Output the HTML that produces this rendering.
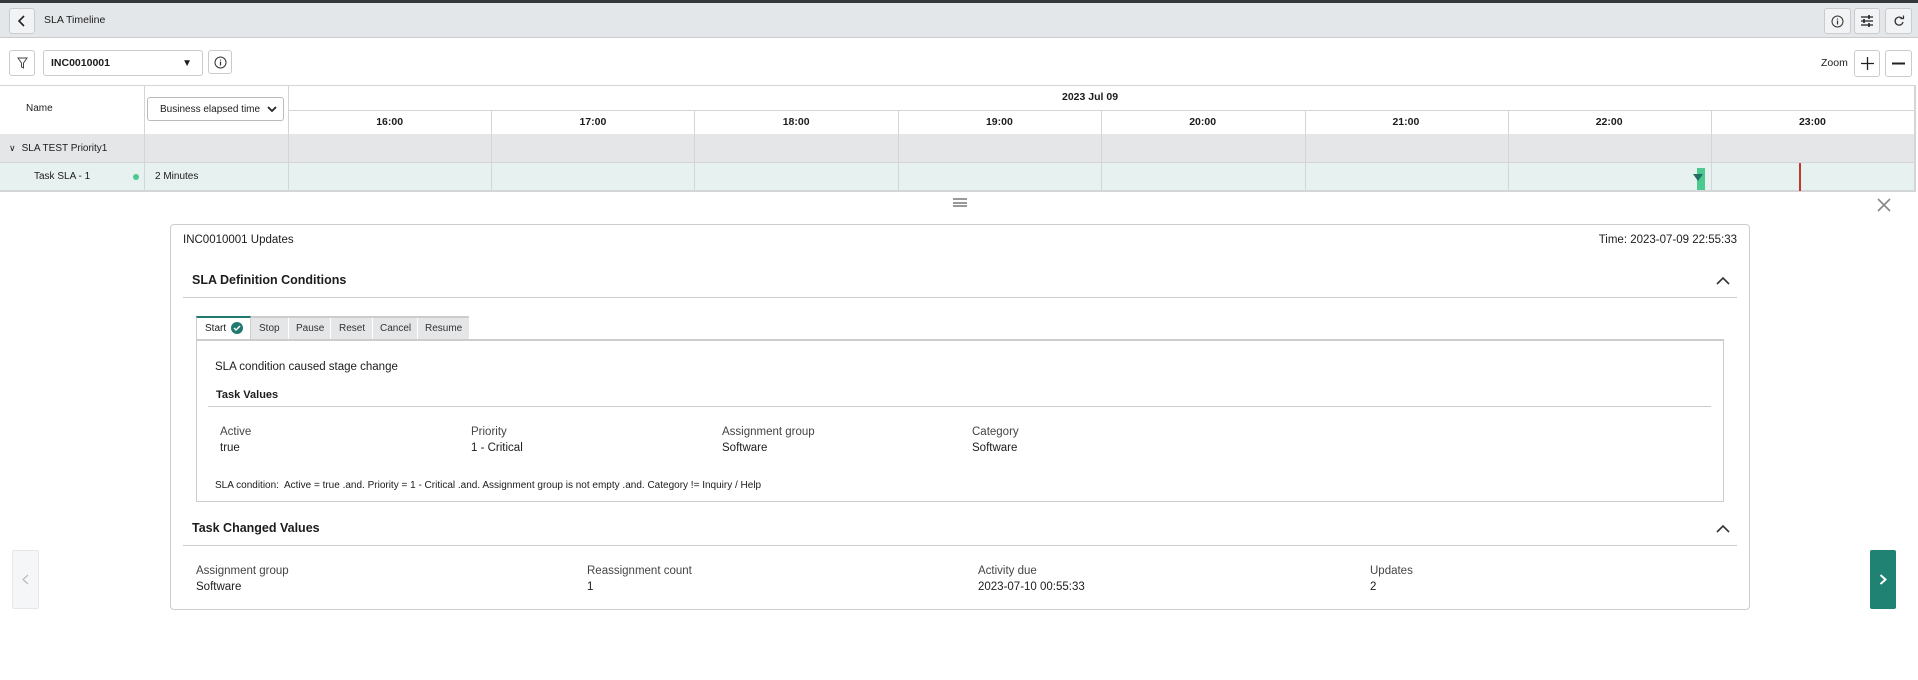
<!DOCTYPE html>
<html><head><meta charset="utf-8"><style>
*{box-sizing:border-box;margin:0;padding:0}
body{width:1918px;height:680px;overflow:hidden;background:#fff;font-family:"Liberation Sans",sans-serif;color:#1c1c1c;position:relative}
.a{position:absolute}
.btn{position:absolute;border:1px solid #c9cbce;border-radius:3px;background:#fff;display:flex;align-items:center;justify-content:center}
.hb{background:#f2f3f4}
.t{position:absolute;white-space:nowrap}
.vl{position:absolute;width:1px;background:#d3d5d7}
</style></head><body>
<div class="a" style="left:0;top:0;width:1918px;height:3px;background:#35373a"></div>
<div class="a" style="left:0;top:3px;width:1918px;height:35px;background:#e4e7ea;border-bottom:1px solid #c9cbce"></div>
<div class="btn hb" style="left:9px;top:8px;width:26px;height:26px"><svg width="12" height="12" viewBox="0 0 12 12"><path d="M8 1L3 6l5 5" fill="none" stroke="#222" stroke-width="1.6"/></svg></div>
<div class="t" style="left:44px;top:14px;font-size:10.5px">SLA Timeline</div>
<div class="btn hb" style="left:1824px;top:8px;width:27px;height:26px"><svg width="13" height="13" viewBox="0 0 13 13"><circle cx="6.5" cy="6.5" r="5.5" fill="none" stroke="#333" stroke-width="1"/><path d="M6.5 5.5v4M6.5 3.5v1" stroke="#333" stroke-width="1.2"/></svg></div>
<div class="btn hb" style="left:1854px;top:8px;width:26px;height:26px"><svg width="14" height="12" viewBox="0 0 14 12"><path d="M1 2h12M1 6h12M1 10h12" stroke="#222" stroke-width="1.3"/><path d="M9 0v4M4 4v4M9 8v4" stroke="#222" stroke-width="1.6"/></svg></div>
<div class="btn hb" style="left:1885px;top:8px;width:27px;height:26px"><svg width="12" height="12" viewBox="0 0 12 12"><path d="M9.5 4A4 4 0 1 0 10 7" fill="none" stroke="#333" stroke-width="1.3"/><path d="M7.5 3.5h3v-3" fill="none" stroke="#333" stroke-width="1.2"/></svg></div>

<div class="btn" style="left:9px;top:50px;width:26px;height:26px"><svg width="11" height="12" viewBox="0 0 11 12"><path d="M1 1h9L6.5 6v5l-2-1V6z" fill="none" stroke="#444" stroke-width="1"/></svg></div>
<div class="btn" style="left:43px;top:50px;width:160px;height:26px;justify-content:space-between;padding:0 10px 0 7px"><span style="font-size:10.5px;font-weight:bold">INC0010001</span><span style="font-size:10px">&#9660;</span></div>
<div class="btn" style="left:208px;top:50px;width:24px;height:24px"><svg width="13" height="13" viewBox="0 0 13 13"><circle cx="6.5" cy="6.5" r="5.5" fill="none" stroke="#333" stroke-width="1"/><path d="M6.5 5.5v4M6.5 3.5v1" stroke="#333" stroke-width="1.2"/></svg></div>
<div class="t" style="left:1821px;top:57px;font-size:10.5px">Zoom</div>
<div class="btn" style="left:1854px;top:50px;width:26px;height:27px"><svg width="13" height="13"><path d="M6.5 0v13M0 6.5h13" stroke="#222" stroke-width="1.3"/></svg></div>
<div class="btn" style="left:1885px;top:50px;width:27px;height:27px"><svg width="13" height="13"><path d="M0 6.5h13" stroke="#222" stroke-width="2"/></svg></div>

<div class="a" style="left:0;top:85px;width:1916px;height:107px;border-top:1px solid #d3d5d7;border-bottom:2px solid #d3d5d7;border-right:2px solid #d3d5d7"></div>
<div class="a" style="left:0;top:134px;width:1914px;height:29px;background:#e5e6e8;border-bottom:1px solid #d3d5d7"></div>
<div class="a" style="left:0;top:163px;width:1914px;height:27px;background:#e7f1ef"></div>
<div class="a" style="left:288px;top:110px;width:1626px;height:1px;background:#d3d5d7"></div>
<div class="vl" style="left:144px;top:86px;height:104px"></div>
<div class="vl" style="left:288px;top:86px;height:104px"></div>
<div class="vl" style="left:491px;top:110px;height:80px"></div>
<div class="vl" style="left:694px;top:110px;height:80px"></div>
<div class="vl" style="left:898px;top:110px;height:80px"></div>
<div class="vl" style="left:1101px;top:110px;height:80px"></div>
<div class="vl" style="left:1305px;top:110px;height:80px"></div>
<div class="vl" style="left:1508px;top:110px;height:80px"></div>
<div class="vl" style="left:1711px;top:110px;height:80px"></div>
<div class="t" style="left:26px;top:103px;font-size:10px">Name</div>
<div class="btn" style="left:147px;top:97px;width:137px;height:24px;justify-content:space-between;padding:0 6px 0 12px;border-color:#bbb"><span style="font-size:10px">Business elapsed time</span><svg width="10" height="7"><path d="M1 1l4 4 4-4" fill="none" stroke="#222" stroke-width="1.8"/></svg></div>
<div class="t" style="left:1062px;top:91px;font-size:10.5px;font-weight:bold">2023 Jul 09</div>
<div class="t" style="left:288px;top:116px;width:1626px;display:flex;font-size:10.5px;font-weight:bold">
<span style="width:203.4px;text-align:center">16:00</span><span style="width:203.4px;text-align:center">17:00</span><span style="width:203.4px;text-align:center">18:00</span><span style="width:203.4px;text-align:center">19:00</span><span style="width:203.4px;text-align:center">20:00</span><span style="width:203.4px;text-align:center">21:00</span><span style="width:203.4px;text-align:center">22:00</span><span style="width:203.4px;text-align:center">23:00</span></div>
<div class="t" style="left:9px;top:143px;font-size:10px"><span style="display:inline-block;font-size:9px;margin-right:6px">&#8744;</span>SLA TEST Priority1</div>
<div class="t" style="left:34px;top:171px;font-size:10px">Task SLA - 1</div>
<div class="a" style="left:133px;top:174px;width:6px;height:6px;border-radius:50%;background:#4cc98e"></div>
<div class="t" style="left:155px;top:171px;font-size:10px">2 Minutes</div>
<div class="a" style="left:1697px;top:168px;width:8px;height:22px;background:#4cc98e"></div>
<div class="a" style="left:1693px;top:174px;width:0;height:0;border-left:5px solid transparent;border-right:5px solid transparent;border-top:7px solid #1f6f63"></div>
<div class="a" style="left:1799px;top:163px;width:2px;height:28px;background:#c0392b"></div>

<div class="a" style="left:953px;top:198px;width:14px;height:9px;border-top:2px solid #999;border-bottom:2px solid #999"><div style="margin-top:1.5px;height:2px;background:#999"></div></div>
<svg class="a" style="left:1877px;top:198px" width="14" height="14"><path d="M1 1l12 12M13 1L1 13" stroke="#888" stroke-width="1.6"/></svg>

<div class="a" style="left:170px;top:224px;width:1580px;height:386px;border:1px solid #ccc;border-radius:4px"></div>
<div class="t" style="left:183px;top:234px;font-size:11.5px">INC0010001 Updates</div>
<div class="t" style="left:1737px;top:234px;font-size:11.5px;transform:translateX(-100%)">Time: 2023-07-09 22:55:33</div>
<div class="t" style="left:192px;top:273px;font-size:12.5px;font-weight:bold">SLA Definition Conditions</div>
<svg class="a" style="left:1716px;top:276px" width="14" height="9"><path d="M1 8l6-6 6 6" fill="none" stroke="#333" stroke-width="1.6"/></svg>
<div class="a" style="left:183px;top:297px;width:1554px;height:1px;background:#ccc"></div>

<div class="a" style="left:196px;top:316px;width:273px;height:23px;background:#e4e6e8;border-top:2px solid #ccc"></div>
<div class="a" style="left:196px;top:316px;width:55px;height:24px;background:#fff;border-top:2px solid #1f7a6e;border-left:1px solid #ccc;border-right:1px solid #ccc"></div>
<div class="t" style="left:205px;top:323px;font-size:10px">Start</div>
<svg class="a" style="left:231px;top:322px" width="12" height="12"><circle cx="6" cy="6" r="6" fill="#1f7a6e"/><path d="M3 6l2 2 4-4" fill="none" stroke="#fff" stroke-width="1.5"/></svg>
<div class="vl" style="left:288px;top:318px;height:21px;background:#fff"></div>
<div class="vl" style="left:330px;top:318px;height:21px;background:#fff"></div>
<div class="vl" style="left:372px;top:318px;height:21px;background:#fff"></div>
<div class="vl" style="left:417px;top:318px;height:21px;background:#fff"></div>
<div class="t" style="left:259px;top:323px;font-size:10px;color:#333">Stop</div>
<div class="t" style="left:296px;top:323px;font-size:10px;color:#333">Pause</div>
<div class="t" style="left:339px;top:323px;font-size:10px;color:#333">Reset</div>
<div class="t" style="left:380px;top:323px;font-size:10px;color:#333">Cancel</div>
<div class="t" style="left:425px;top:323px;font-size:10px;color:#333">Resume</div>
<div class="a" style="left:196px;top:339px;width:1528px;height:163px;border:1px solid #ccc;border-top:2px solid #ccc"></div>
<div class="a" style="left:251px;top:339px;width:1472px;height:2px;background:#ccc"></div>
<div class="t" style="left:215px;top:361px;font-size:11.5px">SLA condition caused stage change</div>
<div class="t" style="left:216px;top:389px;font-size:11px;font-weight:bold">Task Values</div>
<div class="a" style="left:208px;top:406px;width:1503px;height:1px;background:#ccc"></div>
<div class="t" style="left:220px;top:426px;font-size:11.5px;color:#444">Active</div>
<div class="t" style="left:220px;top:442px;font-size:11.5px">true</div>
<div class="t" style="left:471px;top:426px;font-size:11.5px;color:#444">Priority</div>
<div class="t" style="left:471px;top:442px;font-size:11.5px">1 - Critical</div>
<div class="t" style="left:722px;top:426px;font-size:11.5px;color:#444">Assignment group</div>
<div class="t" style="left:722px;top:442px;font-size:11.5px">Software</div>
<div class="t" style="left:972px;top:426px;font-size:11.5px;color:#444">Category</div>
<div class="t" style="left:972px;top:442px;font-size:11.5px">Software</div>
<div class="t" style="left:215px;top:480px;font-size:10px">SLA condition:&nbsp; Active = true .and. Priority = 1 - Critical .and. Assignment group is not empty .and. Category != Inquiry / Help</div>

<div class="t" style="left:192px;top:521px;font-size:12.5px;font-weight:bold">Task Changed Values</div>
<svg class="a" style="left:1716px;top:524px" width="14" height="9"><path d="M1 8l6-6 6 6" fill="none" stroke="#333" stroke-width="1.6"/></svg>
<div class="a" style="left:183px;top:545px;width:1554px;height:1px;background:#ccc"></div>
<div class="t" style="left:196px;top:565px;font-size:11.5px;color:#444">Assignment group</div>
<div class="t" style="left:196px;top:581px;font-size:11.5px">Software</div>
<div class="t" style="left:587px;top:565px;font-size:11.5px;color:#444">Reassignment count</div>
<div class="t" style="left:587px;top:581px;font-size:11.5px">1</div>
<div class="t" style="left:978px;top:565px;font-size:11.5px;color:#444">Activity due</div>
<div class="t" style="left:978px;top:581px;font-size:11.5px">2023-07-10 00:55:33</div>
<div class="t" style="left:1370px;top:565px;font-size:11.5px;color:#444">Updates</div>
<div class="t" style="left:1370px;top:581px;font-size:11.5px">2</div>

<div class="a" style="left:12px;top:550px;width:27px;height:59px;background:#f5f6f7;border:1px solid #e4e6e8;border-radius:2px"></div>
<svg class="a" style="left:22px;top:574px" width="7" height="11"><path d="M6 1L1 5.5 6 10" fill="none" stroke="#bbb" stroke-width="1.2"/></svg>
<div class="a" style="left:1870px;top:550px;width:26px;height:59px;background:#1f8272;border-radius:2px"></div>
<svg class="a" style="left:1879px;top:574px" width="8" height="11"><path d="M1.5 1l5 4.5-5 4.5" fill="none" stroke="#fff" stroke-width="2"/></svg>
</body></html>
